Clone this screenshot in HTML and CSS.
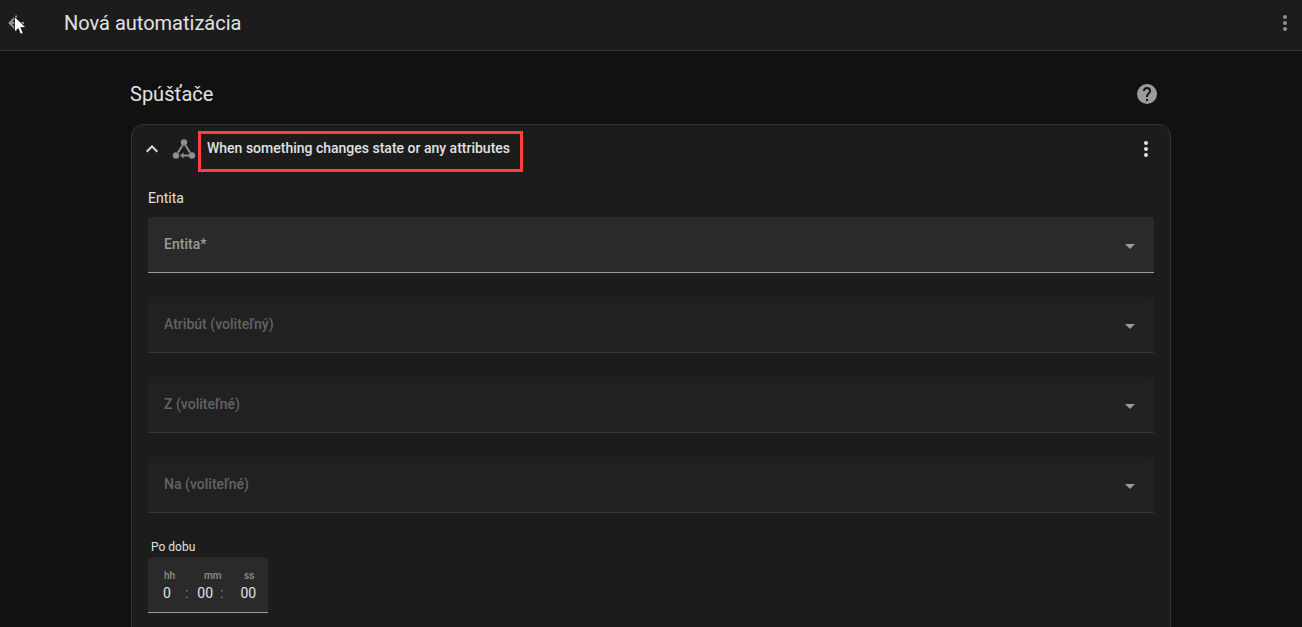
FILE: index.html
```html
<!DOCTYPE html>
<html lang="sk">
<head>
<meta charset="utf-8">
<title>Nová automatizácia</title>
<link rel="stylesheet" href="styles.css">
</head>
<body>
<header class="topbar">
  <svg class="back" viewBox="0 0 24 24"><path d="M20 11v2H8l5.500 5.500-1.420 1.420L4.160 12l7.920-7.920L13.500 5.500 8 11h12z"/></svg>
  <h1 class="title">Nová automatizácia</h1>
  <svg class="menu" viewBox="0 0 24 24"><path d="M12 16a2 2 0 1 1 0 4 2 2 0 0 1 0-4zm0-6a2 2 0 1 1 0 4 2 2 0 0 1 0-4zm0-6a2 2 0 1 1 0 4 2 2 0 0 1 0-4z"/></svg>
</header>
<svg class="cursor" viewBox="0 0 12 19"><path d="M.5.5v15.500l3.700-3.500 2.400 5.800 2.600-1.100-2.400-5.600h5.200z" fill="#fff" stroke="#000" stroke-width=".7"/></svg>
<main class="content">
  <div class="section-head">
    <h2 class="section-title">Spúšťače</h2>
    <svg class="help" viewBox="0 0 24 24"><path d="M15.070 11.250l-.9.920C13.450 12.890 13 13.500 13 15h-2v-.5c0-1.110.45-2.110 1.170-2.830l1.240-1.260c.37-.36.59-.86.59-1.410a2 2 0 0 0-2-2 2 2 0 0 0-2 2H8a4 4 0 0 1 4-4 4 4 0 0 1 4 4c0 .88-.36 1.670-.93 2.250zM13 19h-2v-2h2v2zM12 2A10 10 0 0 0 2 12a10 10 0 0 0 10 10 10 10 0 0 0 10-10c0-5.530-4.500-10-10-10z"/></svg>
  </div>
  <section class="card">
    <div class="card-head">
      <svg class="chevron" viewBox="0 0 24 24"><path d="M7.410 15.410 12 10.830l4.590 4.580L18 14l-6-6-6 6z"/></svg>
      <svg class="state-icon" viewBox="0 0 24 24">
        <circle cx="12" cy="5.500" r="3.200"/><circle cx="4" cy="18.500" r="3.200"/><circle cx="20" cy="18.500" r="3.200"/>
        <path d="M8 18.500l3.500-3v6z"/>
        <path class="state-line" d="M10.500 8.500 6 15.500M13.500 8.500 18 15.500M10 18.500h7"/>
      </svg>
      <div class="card-title">When something changes state or any attributes</div>
      <svg class="card-menu" viewBox="0 0 24 24"><path d="M12 16a2 2 0 1 1 0 4 2 2 0 0 1 0-4zm0-6a2 2 0 1 1 0 4 2 2 0 0 1 0-4zm0-6a2 2 0 1 1 0 4 2 2 0 0 1 0-4z"/></svg>
      <div class="highlight"></div>
    </div>
    <div class="card-body">
      <div class="field-label">Entita</div>
      <div class="select">
        <span class="select-text">Entita*</span>
        <svg class="caret" viewBox="0 0 10 5"><path d="M0 0h10L5 5z"/></svg>
      </div>
      <div class="select select-off">
        <span class="select-text">Atribút (voliteľný)</span>
        <svg class="caret" viewBox="0 0 10 5"><path d="M0 0h10L5 5z"/></svg>
      </div>
      <div class="select select-off">
        <span class="select-text">Z (voliteľné)</span>
        <svg class="caret" viewBox="0 0 10 5"><path d="M0 0h10L5 5z"/></svg>
      </div>
      <div class="select select-off">
        <span class="select-text">Na (voliteľné)</span>
        <svg class="caret" viewBox="0 0 10 5"><path d="M0 0h10L5 5z"/></svg>
      </div>
      <div class="time-label">Po dobu</div>
      <div class="time">
        <div class="time-units"><span class="unit">hh</span><span class="unit">mm</span><span class="unit">ss</span></div>
        <div class="time-nums">
          <span class="num num-h">0</span><span class="sep sep-a">:</span><span class="num num-m">00</span><span class="sep sep-b">:</span><span class="num num-s">00</span>
        </div>
      </div>
    </div>
  </section>
</main>
</body>
</html>
```
FILE: styles.css
```css
* { box-sizing: border-box; }
html, body { height: 100%; }
body {
  margin: 0;
  height: 627px;
  overflow: hidden;
  background: #111111;
  color: #e1e1e1;
  font-family: Roboto, "Liberation Sans", sans-serif;
  position: relative;
}
.topbar {
  height: 51px;
  background: #1c1c1c;
  border-bottom: 1px solid #333333;
  display: flex;
  align-items: center;
  padding: 0 5px 4px 4px;
}
.back { width: 24px; height: 24px; fill: #8f8f8f; flex: none; }
.title {
  margin: 0 0 0 36px;
  font-size: 20px;
  font-weight: 400;
  flex: 1;
}
.menu { width: 24px; height: 24px; fill: #8f8f8f; flex: none; }
.cursor { position: absolute; left: 14px; top: 16px; width: 12px; height: 19px; }
.content { width: 1040px; margin-left: 131px; }
.section-head {
  height: 73px;
  display: flex;
  align-items: center;
  justify-content: space-between;
  padding: 12px 2px 0 0;
  margin-left: -1px;
}
.section-title { margin: 0; font-size: 20px; font-weight: 400; }
.help { width: 24px; height: 24px; fill: #9b9b9b; margin-right: 10px; }
.card {
  background: #1c1c1c;
  border: 1px solid #333333;
  border-radius: 12px;
  height: 560px;
}
.card-head {
  height: 48px;
  display: flex;
  align-items: center;
  position: relative;
}
.chevron { width: 24px; height: 24px; fill: #e1e1e1; margin-left: 8px; flex: none; }
.state-icon { width: 24px; height: 24px; fill: #8f8f8f; margin-left: 8px; flex: none; }
.state-line { fill: none; stroke: #8f8f8f; stroke-width: 2; }
.card-title { margin: -2px 0 0 11px; font-size: 14px; font-weight: 500; flex: 1; }
.card-menu { width: 24px; height: 24px; fill: #e1e1e1; margin-right: 12px; flex: none; }
.highlight {
  position: absolute;
  left: 66px;
  top: 6px;
  width: 325px;
  height: 41px;
  border: 3px solid #ff4040;
  pointer-events: none;
}
.card-body { padding: 15px 16px 0; }
.field-label { font-size: 14px; line-height: 20px; height: 20px; margin-bottom: 9px; }
.select {
  width: 1006px;
  height: 56px;
  background: #2a2a2a;
  border-bottom: 1px solid #9a9a9a;
  border-radius: 4px 4px 0 0;
  margin-bottom: 24px;
  display: flex;
  align-items: center;
  justify-content: space-between;
  padding: 0 19px 0 16px;
  font-size: 14px;
  font-weight: 500;
  letter-spacing: 0.02px;
  color: #9b9b9b;
}
.select-text { position: relative; top: -1px; }
.select-off {
  background: #212121;
  border-bottom-color: #343434;
  color: #636363;
}
.caret { width: 10px; height: 5px; fill: #9b9b9b; margin-top: 3px; }
.time-label { font-size: 12px; line-height: 16px; margin: 26px 0 2px 3px; }
.time {
  width: 120px;
  height: 56px;
  background: #2a2a2a;
  border-bottom: 1px solid #9a9a9a;
  border-radius: 4px 4px 0 0;
  padding-top: 13px;
}
.time-units { display: flex; padding-left: 16px; }
.unit { flex: none; width: 40px; font-size: 10px; line-height: 12px; color: #8f8f8f; font-weight: 500; }
.time-nums { display: flex; padding-left: 15px; margin-top: 3px; }
.num { font-size: 14px; line-height: 17px; color: #e1e1e1; }
.sep { font-size: 14px; line-height: 17px; color: #8f8f8f; }
.sep-a { margin-left: 14px; }
.num-m { margin-left: 9px; }
.sep-b { margin-left: 7px; }
.num-s { margin-left: 17px; }
```
